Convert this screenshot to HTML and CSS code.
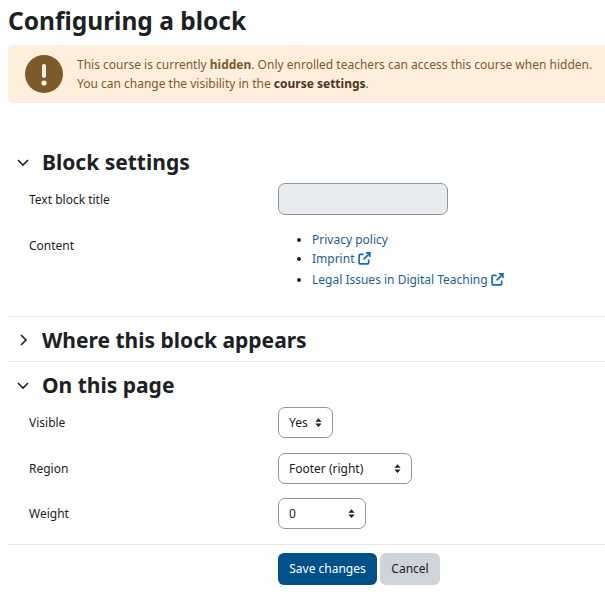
FILE: index.html
```html
<!DOCTYPE html>
<html lang="en">
<head>
    <meta charset="UTF-8">
    <meta name="viewport" content="width=device-width, initial-scale=1.0">
    <title>Configuring a block</title>
    <link rel="stylesheet" href="styles.css">
</head>
<body>
    <h1>Configuring a block</h1>
    <div class="alert">
        <span class="alert-icon">
            <svg width="38" height="38" viewBox="0 0 38 38"><circle cx="19" cy="19" r="19" fill="#7d5a29"/><rect x="17" y="9" width="4" height="14" rx="2" fill="#fdefdc"/><circle cx="19" cy="28" r="2.6" fill="#fdefdc"/></svg>
        </span>
        <p>This course is currently <b>hidden</b>. Only enrolled teachers can access this course when hidden.<br>You can change the visibility in the <b class="dark">course settings</b>.</p>
    </div>

    <section class="block-settings">
        <h2>
            <svg class="chev" width="14" height="14" viewBox="0 0 14 14"><path d="M2 5l5 5 5-5" fill="none" stroke="#1d2125" stroke-width="1.6"/></svg>
            Block settings
        </h2>
        <div class="row row-title">
            <label>Text block title</label>
            <div class="input"></div>
        </div>
        <div class="row row-content">
            <label>Content</label>
            <ul>
                <li><a href="#">Privacy policy</a></li>
                <li><a href="#">Imprint</a>
                    <svg class="ext" width="13" height="13" viewBox="0 0 14 14"><path d="M6 2.5H2.2a1 1 0 0 0-1 1v8.300a1 1 0 0 0 1 1h8.300a1 1 0 0 0 1-1V8M8.500 1h4.300v4.300M12.500 1.500L6 8" fill="none" stroke="#0f6cbf" stroke-width="1.800"/></svg>
                </li>
                <li><a href="#">Legal Issues in Digital Teaching</a>
                    <svg class="ext" width="13" height="13" viewBox="0 0 14 14"><path d="M6 2.5H2.2a1 1 0 0 0-1 1v8.300a1 1 0 0 0 1 1h8.300a1 1 0 0 0 1-1V8M8.500 1h4.300v4.300M12.500 1.500L6 8" fill="none" stroke="#0f6cbf" stroke-width="1.800"/></svg>
                </li>
            </ul>
        </div>
    </section>

    <section class="collapsed">
        <h2>
            <svg class="chev" width="14" height="14" viewBox="0 0 14 14"><path d="M5 2l5 5-5 5" fill="none" stroke="#1d2125" stroke-width="1.600"/></svg>
            Where this block appears
        </h2>
    </section>

    <section class="on-page">
        <h2>
            <svg class="chev" width="14" height="14" viewBox="0 0 14 14"><path d="M2 5l5 5 5-5" fill="none" stroke="#1d2125" stroke-width="1.600"/></svg>
            On this page
        </h2>
        <div class="row">
            <label>Visible</label>
            <div class="select select-visible">Yes<svg class="arrows" width="7" height="9" viewBox="0 0 8 10"><path d="M4 0l3.500 4H.5zM4 10L.5 6h7z" fill="#1d2125"/></svg></div>
        </div>
        <div class="row">
            <label>Region</label>
            <div class="select select-region">Footer (right)<svg class="arrows" width="7" height="9" viewBox="0 0 8 10"><path d="M4 0l3.500 4H.5zM4 10L.5 6h7z" fill="#1d2125"/></svg></div>
        </div>
        <div class="row">
            <label>Weight</label>
            <div class="select select-weight">0<svg class="arrows" width="7" height="9" viewBox="0 0 8 10"><path d="M4 0l3.500 4H.5zM4 10L.5 6h7z" fill="#1d2125"/></svg></div>
        </div>
    </section>

    <div class="actions">
        <button class="save">Save changes</button>
        <button class="cancel">Cancel</button>
    </div>
</body>
</html>
```

FILE: styles.css
```css
* {
    box-sizing: border-box;
}
html, body {
    overflow: hidden;
}
body {
    margin: 0;
    height: 599px;
    padding-left: 8px;
    background: #fff;
    color: #1d2125;
    font-family: "Noto Sans", Arial, sans-serif;
    font-size: 12px;
}
h1 {
    margin: 0;
    height: 45px;
    font-size: 24.500px;
    line-height: 41px;
    font-weight: 700;
}
.alert {
    display: flex;
    align-items: center;
    gap: 14px;
    height: 58px;
    padding-left: 17px;
    background: #fdefdc;
    border-radius: 6px 0 0 6px;
    color: #7d5a29;
    font-size: 12px;
}
.alert p {
    margin: 0;
    line-height: 19px;
    white-space: nowrap;
}
.alert b {
    font-weight: 700;
}
.alert .dark {
    color: #4b3618;
}
.alert-icon {
    display: flex;
}
h2 {
    display: flex;
    align-items: center;
    margin: 0;
    font-size: 21px;
    font-weight: 700;
    height: 30px;
}
.chev {
    margin-left: 8px;
    margin-right: 12px;
}
.block-settings {
    padding-top: 44px;
    height: 214px;
    border-bottom: 1px solid #e6e8ea;
}
.row {
    display: grid;
    grid-template-columns: 249px auto;
    justify-content: start;
    align-items: center;
    height: 31px;
    margin-bottom: 14.700px;
    padding-left: 21px;
}
.row-title {
    margin-top: 6px;
    margin-bottom: 15px;
    height: 32px;
}
.row-content {
    align-items: start;
}
.row-content label {
    line-height: 31px;
}
.input {
    width: 170px;
    height: 32px;
    background: #e9ecef;
    border: 1px solid #8f959e;
    border-radius: 7px;
}
ul {
    margin: 0;
    padding: 0 0 0 34px;
}
li {
    height: 19px;
    line-height: 19px;
}
li:nth-child(2) {
    height: 21px;
}
a {
    color: #1a5f92;
    text-decoration: none;
}
.ext {
    vertical-align: -2px;
}
.collapsed {
    height: 45px;
    padding-top: 8px;
    border-bottom: 1px solid #e6e8ea;
}
.on-page {
    padding-top: 8px;
    height: 183px;
    border-bottom: 1px solid #e3e7ea;
}
.on-page h2 {
    margin-bottom: 7px;
}
.select {
    position: relative;
    height: 31px;
    line-height: 29px;
    padding-left: 10px;
    background: #fff;
    border: 1px solid #8f959e;
    border-radius: 7px;
}
.select-visible {
    width: 55px;
}
.select-region {
    width: 134px;
}
.select-weight {
    width: 88px;
}
.arrows {
    position: absolute;
    right: 10px;
    top: 10px;
}
.actions {
    display: flex;
    gap: 3px;
    padding: 8px 0 0 270px;
}
button {
    height: 32px;
    border: 0;
    border-radius: 6px;
    padding: 0 0 1px;
    font-family: inherit;
    font-size: 12px;
}
.save {
    width: 99px;
    background: #00508a;
    color: #fff;
}
.cancel {
    width: 60px;
    background: #ced4da;
    color: #1d2125;
}
```
